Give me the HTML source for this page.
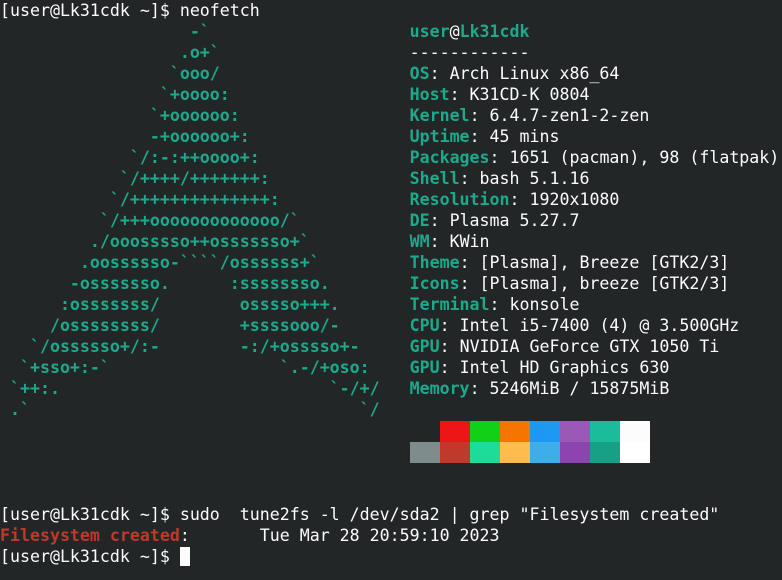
<!DOCTYPE html>
<html><head><meta charset="utf-8"><style>
html,body{margin:0;padding:0;background:#232627;width:782px;height:580px;overflow:hidden}
pre{margin:0;font-family:"DejaVu Sans Mono","Liberation Mono",monospace;font-size:16.6px;line-height:21px;color:#fcfcfc;position:absolute;top:0;left:0}
.t{color:#1ca98c;font-weight:bold}
.r{color:#c0392b;font-weight:bold}
.p{position:absolute;width:30px;height:21px}
.cur{display:inline-block;width:10px;height:19px;background:#fcfcfc;vertical-align:-4px}
</style></head><body>
<pre>[user@Lk31cdk ~]$ neofetch
<span class="t">                   -&#96;                  </span>  <span class="t">user</span>@<span class="t">Lk31cdk</span>
<span class="t">                  .o+&#96;                 </span>  ------------
<span class="t">                 &#96;ooo/                 </span>  <span class="t">OS</span>: Arch Linux x86_64
<span class="t">                &#96;+oooo:                </span>  <span class="t">Host</span>: K31CD-K 0804
<span class="t">               &#96;+oooooo:               </span>  <span class="t">Kernel</span>: 6.4.7-zen1-2-zen
<span class="t">               -+oooooo+:              </span>  <span class="t">Uptime</span>: 45 mins
<span class="t">             &#96;/:-:++oooo+:             </span>  <span class="t">Packages</span>: 1651 (pacman), 98 (flatpak)
<span class="t">            &#96;/++++/+++++++:            </span>  <span class="t">Shell</span>: bash 5.1.16
<span class="t">           &#96;/++++++++++++++:           </span>  <span class="t">Resolution</span>: 1920x1080
<span class="t">          &#96;/+++ooooooooooooo/&#96;         </span>  <span class="t">DE</span>: Plasma 5.27.7
<span class="t">         ./ooosssso++osssssso+&#96;        </span>  <span class="t">WM</span>: KWin
<span class="t">        .oossssso-&#96;&#96;&#96;&#96;/ossssss+&#96;       </span>  <span class="t">Theme</span>: [Plasma], Breeze [GTK2/3]
<span class="t">       -osssssso.      :ssssssso.      </span>  <span class="t">Icons</span>: [Plasma], breeze [GTK2/3]
<span class="t">      :osssssss/        osssso+++.     </span>  <span class="t">Terminal</span>: konsole
<span class="t">     /ossssssss/        +ssssooo/-     </span>  <span class="t">CPU</span>: Intel i5-7400 (4) @ 3.500GHz
<span class="t">   &#96;/ossssso+/:-        -:/+osssso+-   </span>  <span class="t">GPU</span>: NVIDIA GeForce GTX 1050 Ti
<span class="t">  &#96;+sso+:-&#96;                 &#96;.-/+oso:  </span>  <span class="t">GPU</span>: Intel HD Graphics 630
<span class="t"> &#96;++:.                           &#96;-/+/ </span>  <span class="t">Memory</span>: 5246MiB / 15875MiB
<span class="t"> .&#96;                                 &#96;/ </span>




[user@Lk31cdk ~]$ sudo  tune2fs -l /dev/sda2 | grep "Filesystem created"
<span class="r">Filesystem created</span>:       Tue Mar 28 20:59:10 2023
[user@Lk31cdk ~]$ <span class="cur"></span></pre>
<div class="p" style="left:440px;top:421px;background:#ed1515"></div>
<div class="p" style="left:470px;top:421px;background:#11d116"></div>
<div class="p" style="left:500px;top:421px;background:#f67400"></div>
<div class="p" style="left:530px;top:421px;background:#1d99f3"></div>
<div class="p" style="left:560px;top:421px;background:#9b59b6"></div>
<div class="p" style="left:590px;top:421px;background:#1abc9c"></div>
<div class="p" style="left:620px;top:421px;background:#fcfcfc"></div>
<div class="p" style="left:410px;top:442px;background:#7f8c8d"></div>
<div class="p" style="left:440px;top:442px;background:#c0392b"></div>
<div class="p" style="left:470px;top:442px;background:#1cdc9a"></div>
<div class="p" style="left:500px;top:442px;background:#fdbc4b"></div>
<div class="p" style="left:530px;top:442px;background:#3daee9"></div>
<div class="p" style="left:560px;top:442px;background:#8e44ad"></div>
<div class="p" style="left:590px;top:442px;background:#16a085"></div>
<div class="p" style="left:620px;top:442px;background:#ffffff"></div>
</body></html>
